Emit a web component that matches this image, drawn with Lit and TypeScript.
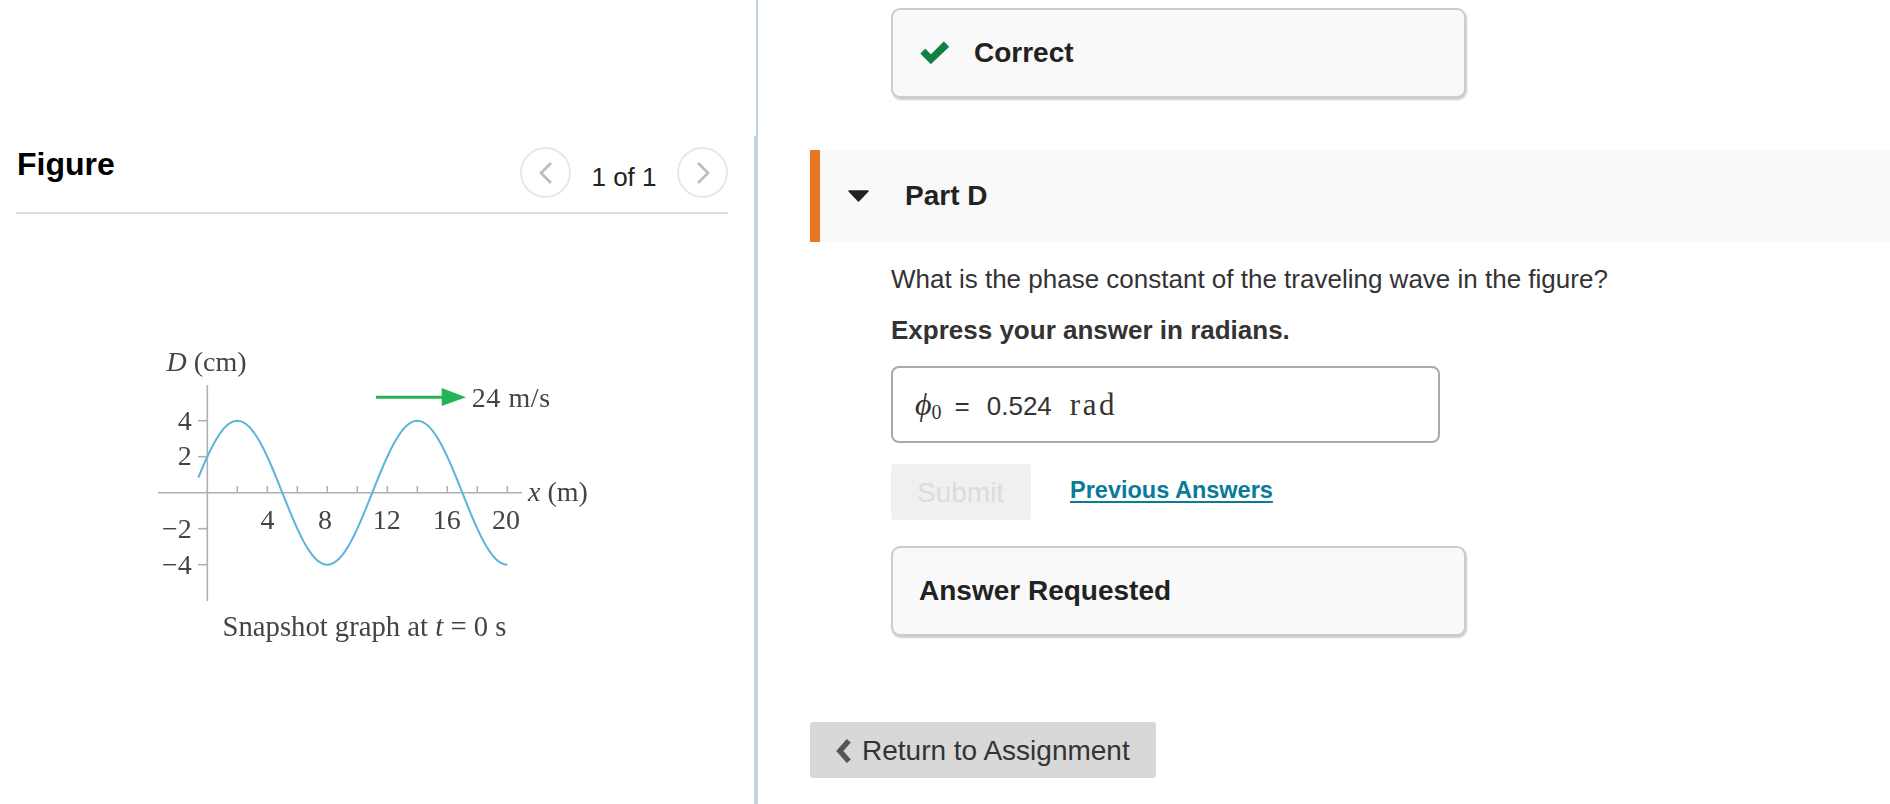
import { LitElement, html, css, svg } from "lit";
import { customElement } from "lit/decorators.js";

const X0 = 207.3;
const Y0 = 492.7;
function wavePath(): string {
  const pts: string[] = [];
  for (let m = -0.6; m <= 20.001; m += 0.2) {
    const d = 4 * Math.sin((2 * Math.PI * (m + 1)) / 12);
    pts.push(`${(X0 + 15 * m).toFixed(1)},${(Y0 - 18 * d).toFixed(1)}`);
  }
  return "M" + pts.join(" L");
}

const xTicks = [2, 4, 6, 8, 10, 12, 14, 16, 18, 20];
const yTicks = [4, 2, -2, -4];
const xLabels: [string, number][] = [["4", 267.5], ["8", 325], ["12", 386.7], ["16", 446.7], ["20", 506]];
const yLabels: [string, number][] = [["4", 430], ["2", 465.3], ["−2", 538], ["−4", 574]];

@customElement("app-root")
export class AppRoot extends LitElement {
  static styles = css`
    :host { display: block; width: 1890px; height: 804px; overflow: hidden; background: #fff; font-family: "Liberation Sans", Arial, sans-serif; color: #333; }
    * { box-sizing: border-box; }
    .page { display: flex; height: 804px; }
    .left { width: 758px; flex: none; border-right: 2px solid #c3d3e3; display: flex; flex-direction: column; }
    .panel { margin-top: 136px; flex: 1; width: 756px; border-right: 2px solid #c3d3e3; padding-left: 16px; }
    .fig-head { width: 712px; height: 78px; padding-top: 11px; border-bottom: 2px solid #dcdcdc; display: flex; justify-content: space-between; align-items: flex-start; }
    .fig-title { font-size: 32px; line-height: 36px; font-weight: 700; color: #000; padding: 0 0 0 1px; margin-top: -1px; }
    .pager { display: flex; align-items: flex-start; }
    .circle { width: 51px; height: 51px; border: 2px solid #e8e8e8; border-radius: 50%; display: flex; align-items: center; justify-content: center; background: #fff; }
    .circle svg { display: block; }
    .of { width: 106px; text-align: center; font-size: 26px; line-height: 36px; padding-top: 12px; color: #222; }
    .fig-img { display: block; margin-left: 124px; margin-top: 126px; filter: blur(0.55px); }
    .fig-img .t { font-family: "Liberation Serif", "Times New Roman", serif; font-size: 28px; fill: #444; }
    .fig-img .cap { font-size: 28.7px; }
    .fig-img .i { font-style: italic; }
    .right { flex: 1; padding-left: 52px; min-width: 0; }
    .box { margin-left: 81px; width: 575px; height: 90px; background: #f9f9f9; border: 2px solid #ccc; border-radius: 9px; box-shadow: 1px 2px 2px #ccc; display: flex; align-items: center; font-size: 28px; line-height: 36px; font-weight: 700; color: #222; }
    .correct { margin-top: 8px; padding-left: 27px; gap: 25px; }
    .partd { margin-top: 52px; height: 92px; background: #f9f9f9; border-left: 10px solid #e87722; display: flex; align-items: center; font-size: 28px; font-weight: 700; color: #222; padding-left: 28px; gap: 36px; }
    .content { margin-left: 81px; }
    .q { margin-top: 19px; font-size: 26px; line-height: 36px; }
    .ex { margin-top: 15px; font-size: 26px; line-height: 36px; font-weight: 700; }
    .input { margin-top: 18px; width: 549px; height: 77px; border: 2px solid #aaa; border-radius: 8px; display: flex; align-items: baseline; padding: 18px 0 0 22px; font-size: 26px; line-height: 36px; color: #333; }
    .phi { font-family: "Liberation Serif", serif; font-style: italic; font-size: 32px; }
    .sub { font-family: "Liberation Serif", serif; font-size: 20px; transform: translateY(4px); display: inline-block; }
    .eq { margin-left: 13px; font-size: 26px; }
    .val { margin-left: 17px; }
    .unit { margin-left: 18px; font-family: "Liberation Serif", serif; font-size: 31px; letter-spacing: 2.6px; }
    .actions { margin-top: 21px; display: flex; align-items: flex-start; }
    .submit { width: 140px; height: 56px; background: #f0f0f0; border-radius: 3px; color: #dcdcdc; font-size: 28px; line-height: 36px; padding: 11px 0 0 26px; }
    .prev { margin-left: 39px; margin-top: 12px; font-size: 23.5px; line-height: 28px; font-weight: 700; color: #0a7a9b; text-decoration: underline; text-decoration-thickness: 2px; text-underline-offset: 3px; }
    .answer { margin-top: 26px; margin-left: 0; padding-left: 26px; }
    .back { margin-top: 86px; width: 346px; height: 56px; background: #d8d8d8; border-radius: 3px; display: flex; align-items: center; padding: 1px 0 0 26px; gap: 11px; font-size: 28px; color: #333; }
    .check { margin-top: -2px; }
  `;

  private chevron(left: boolean) {
    const pts = left ? "12,1 2,11 12,21" : "2,1 12,11 2,21";
    return html`<div class="circle"><svg width="14" height="22" viewBox="0 0 14 22"><polyline points=${pts} fill="none" stroke="#bdbdbd" stroke-width="2.8"></polyline></svg></div>`;
  }

  private figure() {
    return html`<svg class="fig-img" width="460" height="310" viewBox="140 340 460 310">
      <g stroke="#b0b0b0" stroke-width="1.6" fill="none">
        <line x1="207.3" y1="385" x2="207.3" y2="601"></line>
        <line x1="158" y1="492.7" x2="522" y2="492.7"></line>
        ${xTicks.map((m) => svg`<line x1=${X0 + 15 * m} y1="486" x2=${X0 + 15 * m} y2="492.7"></line>`)}
        ${yTicks.map((d) => svg`<line x1="198" y1=${Y0 - 18 * d} x2="207.3" y2=${Y0 - 18 * d}></line>`)}
      </g>
      <path d=${wavePath()} fill="none" stroke="#5cb3dc" stroke-width="2"></path>
      <line x1="376" y1="397.3" x2="443" y2="397.3" stroke="#25b259" stroke-width="3"></line>
      <polygon points="441.7,388 466,397.3 441.7,406" fill="#25b259"></polygon>
      <text class="t" x="166.5" y="370.7"><tspan class="i">D</tspan> (cm)</text>
      <text class="t" x="471.7" y="406.7" letter-spacing="0.6">24 m/s</text>
      <text class="t" x="528" y="501.3"><tspan class="i">x</tspan> (m)</text>
      ${yLabels.map(([s, y]) => svg`<text class="t" x="191.7" y=${y} text-anchor="end">${s}</text>`)}
      ${xLabels.map(([s, x]) => svg`<text class="t" x=${x} y="529.3" text-anchor="middle">${s}</text>`)}
      <text class="t cap" x="222.5" y="636"
        >Snapshot graph at <tspan class="i">t</tspan> = 0 s</text>
    </svg>`;
  }

  render() {
    return html`<div class="page">
      <div class="left">
        <div class="panel">
          <div class="fig-head">
            <div class="fig-title">Figure</div>
            <div class="pager">
              ${this.chevron(true)}
              <div class="of">1 of 1</div>
              ${this.chevron(false)}
            </div>
          </div>
          ${this.figure()}
        </div>
      </div>
      <div class="right">
        <div class="box correct">
          <svg class="check" width="29" height="23" viewBox="0 0 28 22"><path d="M1 12 L5 8 L10.5 13.5 L23 1 L27.5 5.5 L10.5 21.5 Z" fill="#128043" stroke="#128043" stroke-width="1" stroke-linejoin="round"></path></svg>
          <span>Correct</span>
        </div>
        <div class="partd">
          <svg width="21" height="12" viewBox="0 0 21 12"><path d="M1 1 H20 L10.5 11 Z" fill="#222" stroke="#222" stroke-width="1.5" stroke-linejoin="round"></path></svg>
          <span>Part D</span>
        </div>
        <div class="content">
          <div class="q">What is the phase constant of the traveling wave in the figure?</div>
          <div class="ex">Express your answer in radians.</div>
          <div class="input">
            <span class="phi">ϕ</span><span class="sub">0</span><span class="eq">=</span><span class="val">0.524</span><span class="unit">rad</span>
          </div>
          <div class="actions">
            <div class="submit">Submit</div>
            <div class="prev">Previous Answers</div>
          </div>
          <div class="box answer">Answer Requested</div>
        </div>
        <div class="back">
          <svg width="15" height="24" viewBox="0 0 15 24"><polyline points="12.8,1.8 3.8,12 12.8,22.2" fill="none" stroke="#555" stroke-width="5.4"></polyline></svg>
          <span>Return to Assignment</span>
        </div>
      </div>
    </div>`;
  }
}
